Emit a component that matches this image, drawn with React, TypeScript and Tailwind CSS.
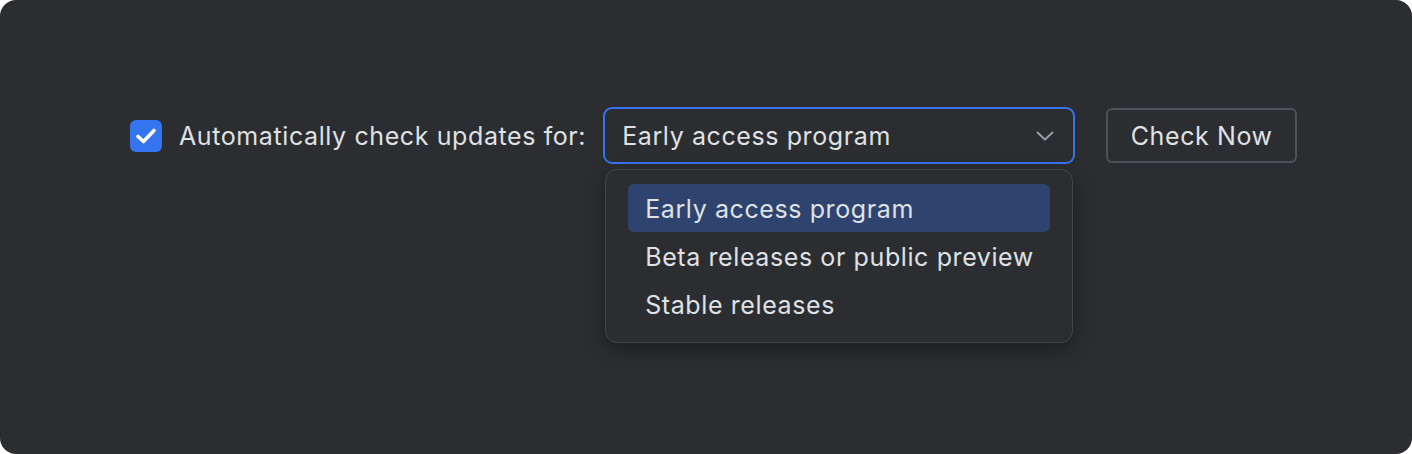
import React from 'react';

const options = ['Early access program', 'Beta releases or public preview', 'Stable releases'];

const Chevron = () => (
  <svg width="18" height="10" viewBox="0 0 18 10" fill="none" className="text-[#9da0a8]">
    <path d="M1.5 1.5 L9 8.5 L16.5 1.5" stroke="currentColor" strokeWidth="1.8" strokeLinecap="round" strokeLinejoin="round" />
  </svg>
);

export default function App() {
  const selected = 0;

  return (
    <div className="bg-white w-[1412px] h-[454px]" style={{ fontFamily: 'Inter, "Noto Sans", sans-serif' }}>
      <div className="h-[454px] rounded-[16px] bg-[#2b2d30] pl-[130px] pt-[107px] text-[#dfe1e5] text-[25px] tracking-[0.6px]">
        <div className="flex items-center">
          {/* checkbox */}
          <div className="w-[32px] h-[32px] rounded-[6px] bg-[#3574f0] flex items-center justify-center">
            <svg width="22" height="18" viewBox="0 0 22 18" fill="none">
              <path d="M3 9.5 L8.5 14.5 L19 3.5" stroke="white" strokeWidth="3.6" strokeLinecap="round" strokeLinejoin="round" />
            </svg>
          </div>
          <span className="ml-[17px] leading-none pt-[2px]">Automatically check updates for:</span>

          {/* select */}
          <div className="relative ml-[17px]">
            <div className="w-[472px] h-[57px] rounded-[9px] border-[2.5px] border-[#3574f0] flex items-center justify-between pl-[17px] pr-[19px]">
              <span className="leading-none pt-[2px]">{options[selected]}</span>
              <Chevron />
            </div>
            <div className="absolute left-[2px] top-[62px] w-[468px] rounded-[12px] border border-[#43454a] bg-[#2b2d30] shadow-[0_6px_20px_rgba(0,0,0,0.35)] px-[22px] py-[14px] z-10">
              {options.map((o, i) => (
                <div
                  key={o}
                  className={`h-[48px] rounded-[6px] flex items-center pl-[17px] ${i === selected ? 'bg-[#2e436e]' : ''}`}
                >
                  <span className="leading-none pt-[2px]">{o}</span>
                </div>
              ))}
            </div>
          </div>

          {/* button */}
          <button className="ml-[31px] w-[191px] h-[55px] rounded-[6px] border-2 border-[#4e5157] flex items-center justify-center pt-[2px] text-[25px] tracking-[0.6px] text-[#dfe1e5]">
            Check Now
          </button>
        </div>
      </div>
    </div>
  );
}
